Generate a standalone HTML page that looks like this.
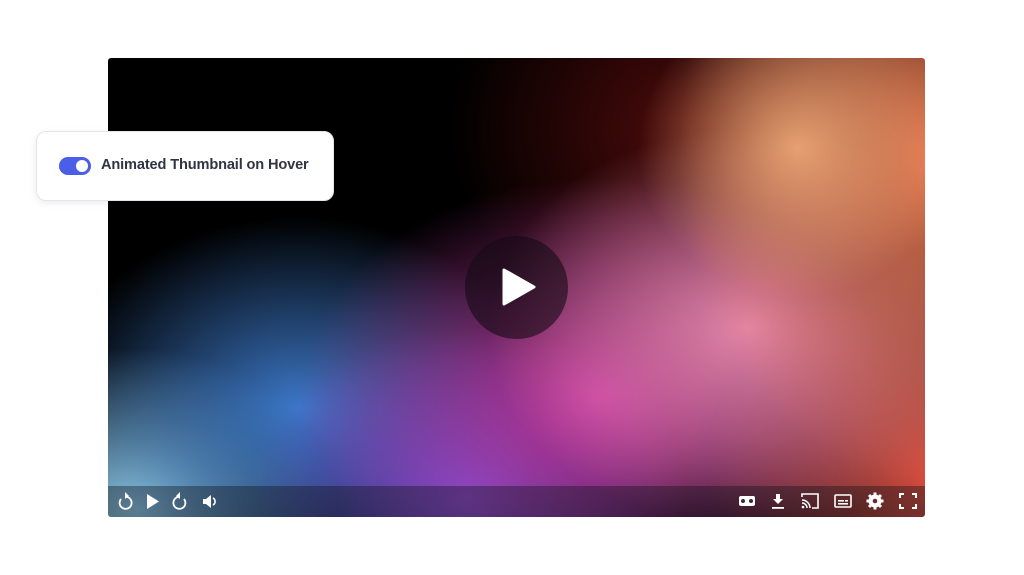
<!DOCTYPE html>
<html><head><style>
body{margin:0;width:1024px;height:575px;background:#fff;position:relative;overflow:hidden;font-family:"Liberation Sans",sans-serif}
.v{position:absolute;left:108px;top:58px;width:817px;height:459px;border-radius:3px;overflow:hidden;
background:
radial-gradient(ellipse 160px 150px at 690px 90px,rgba(240,170,120,.9),rgba(240,170,120,0) 100%),
radial-gradient(ellipse 260px 330px at 830px 100px,rgba(235,120,80,1),rgba(235,120,80,0) 100%),
radial-gradient(ellipse 260px 200px at 640px 270px,rgba(235,140,175,.95),rgba(235,140,175,0) 100%),
radial-gradient(ellipse 230px 230px at 830px 420px,rgba(225,80,65,1),rgba(225,80,65,0) 100%),
radial-gradient(ellipse 300px 220px at 490px 340px,rgba(195,55,160,1),rgba(195,55,160,0) 100%),
radial-gradient(ellipse 220px 170px at 360px 440px,rgba(110,80,220,1),rgba(110,80,220,0) 100%),
radial-gradient(ellipse 250px 190px at 190px 350px,rgba(60,120,200,1),rgba(60,120,200,0) 100%),
radial-gradient(ellipse 200px 160px at 30px 450px,rgba(150,210,230,1),rgba(150,210,230,0) 100%),
radial-gradient(ellipse 240px 210px at 580px 70px,rgba(90,12,12,.85),rgba(90,12,12,0) 100%),
#000}
.play{position:absolute;left:357px;top:178px;width:103px;height:103px;border-radius:50%;background:rgba(20,10,20,.6)}
.bar{position:absolute;left:0;bottom:0;width:100%;height:31px;background:rgba(20,20,30,.4)}
.card{position:absolute;left:36px;top:131px;width:296px;height:68px;background:#fff;border:1px solid #e2e5ea;border-radius:10px;box-shadow:0 2px 8px rgba(0,0,0,.08)}
.tog{position:absolute;left:22px;top:25px;width:32px;height:18px;border-radius:9px;background:#4a5ee8}
.tog:after{content:"";position:absolute;right:3px;top:3px;width:12px;height:12px;border-radius:50%;background:#fff}
.lbl{position:absolute;left:64px;top:25px;font-size:14.6px;color:#2f3542;font-weight:bold;letter-spacing:-0.15px}
svg{position:absolute}
</style></head><body>
<div class="v">
<div class="play"></div>
<svg style="left:393px;top:209px" width="36" height="40" viewBox="0 0 36 40"><path d="M3 3 L33 20 L3 37 Z" fill="#fff" stroke="#fff" stroke-width="3" stroke-linejoin="round"/></svg>
<div class="bar"></div>
<svg style="left:0;top:428px" width="817" height="31" viewBox="0 0 817 31" fill="#fff">
<path d="M19 11 a6 6 0 1 1 -6 2" fill="none" stroke="#fff" stroke-width="1.8"/><path d="M17 6 L21 10 L17 13Z"/>
<path d="M39 8 L51 15.5 L39 23Z"/>
<path d="M70 11 a6 6 0 1 0 6 2" fill="none" stroke="#fff" stroke-width="1.8"/><path d="M72 6 L68 10 L72 13Z"/>
<path d="M95 13 h3 l5-4 v13 l-5-4 h-3z"/><path d="M105 12 a4 4 0 0 1 0 7" fill="none" stroke="#fff" stroke-width="1.6"/>
<rect x="631" y="10" width="16" height="10" rx="2"/><circle cx="635" cy="15" r="2" fill="#333"/><circle cx="643" cy="15" r="2" fill="#333"/>
<path d="M668 8 h4 v5 h3 l-5 5 l-5-5 h3z"/><rect x="664" y="21" width="12" height="1.8"/>
<path d="M694 11 v-3 h16 v14 h-6" fill="none" stroke="#fff" stroke-width="1.6"/><path d="M694 14 a8 8 0 0 1 8 8 M694 17 a5 5 0 0 1 5 5" fill="none" stroke="#fff" stroke-width="1.5"/><circle cx="695" cy="21" r="1.3"/>
<rect x="727" y="9" width="16" height="12" rx="1" fill="none" stroke="#fff" stroke-width="1.6"/><rect x="730" y="14" width="6" height="1.6"/><rect x="737" y="14" width="3" height="1.6"/><rect x="730" y="17" width="10" height="1.6"/>
<circle cx="767" cy="15" r="6.5"/>
<path d="M767 6.5v17M758.5 15h17M761 9l12 12M773 9l-12 12" stroke="#fff" stroke-width="3"/><circle cx="767" cy="15" r="2.3" fill="#6a2a30"/>
<path d="M792 12v-4h4M804 8h4v4M808 18v4h-4M796 22h-4v-4" fill="none" stroke="#fff" stroke-width="2"/>
</svg>
</div>
<div class="card"><div class="tog"></div><div class="lbl">Animated Thumbnail on Hover</div></div>
</body></html>
